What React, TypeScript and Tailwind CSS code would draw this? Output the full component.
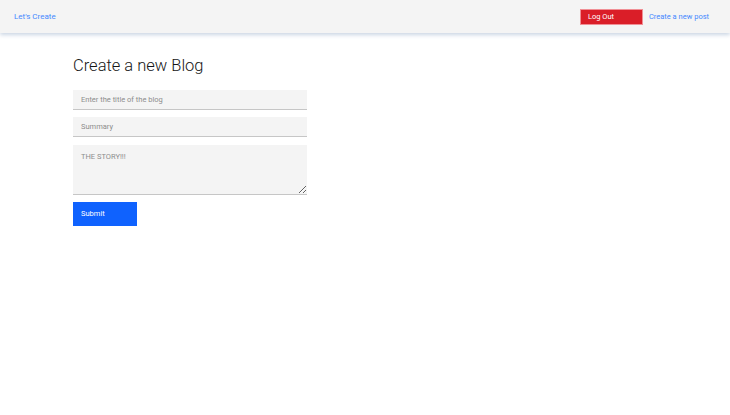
import React from "react";

export default function App() {
  return (
    <div className="min-h-screen bg-white" style={{ fontFamily: "Roboto, 'Noto Sans', sans-serif" }}>
      <header className="h-[33px] bg-[#f4f4f4] flex items-center pl-[14px] pr-[21px] shadow-[0_2px_4px_rgba(140,165,195,0.45)] relative">
        <a className="text-[8px] text-[#4589ff]">Let's Create</a>
        <div className="ml-auto flex items-center">
          <button className="w-[63px] h-[16px] bg-[#da1e28] text-white text-[7.5px] text-left pl-[7px] border border-[#f08f95]">
            Log Out
          </button>
          <a className="ml-[6px] text-[7.5px] text-[#4589ff]">Create a new post</a>
        </div>
      </header>
      <main className="pl-[73px] pt-[21px]">
        <h1 className="text-[16.5px] font-light text-[#161616] leading-[24px]">Create a new Blog</h1>
        <form className="mt-[12px] w-[234px] flex flex-col">
          <input
            className="h-[20px] bg-[#f4f4f4] border-b border-[#c6c6c6] px-[8px] text-[7.5px] placeholder-[#8d8d8d] outline-none"
            placeholder="Enter the title of the blog"
          />
          <input
            className="mt-[7px] h-[20px] bg-[#f4f4f4] border-b border-[#c6c6c6] px-[8px] text-[7.5px] placeholder-[#8d8d8d] outline-none"
            placeholder="Summary"
          />
          <textarea
            className="mt-[8px] h-[50px] bg-[#f4f4f4] border-b border-[#c6c6c6] px-[8px] py-[6px] text-[7.5px] placeholder-[#8d8d8d] outline-none"
            placeholder="THE STORY!!!"
          />
          <button
            type="button"
            className="mt-[7px] w-[64px] h-[24px] bg-[#0f62fe] text-white text-[7.5px] text-left pl-[8px]"
          >
            Submit
          </button>
        </form>
      </main>
    </div>
  );
}
